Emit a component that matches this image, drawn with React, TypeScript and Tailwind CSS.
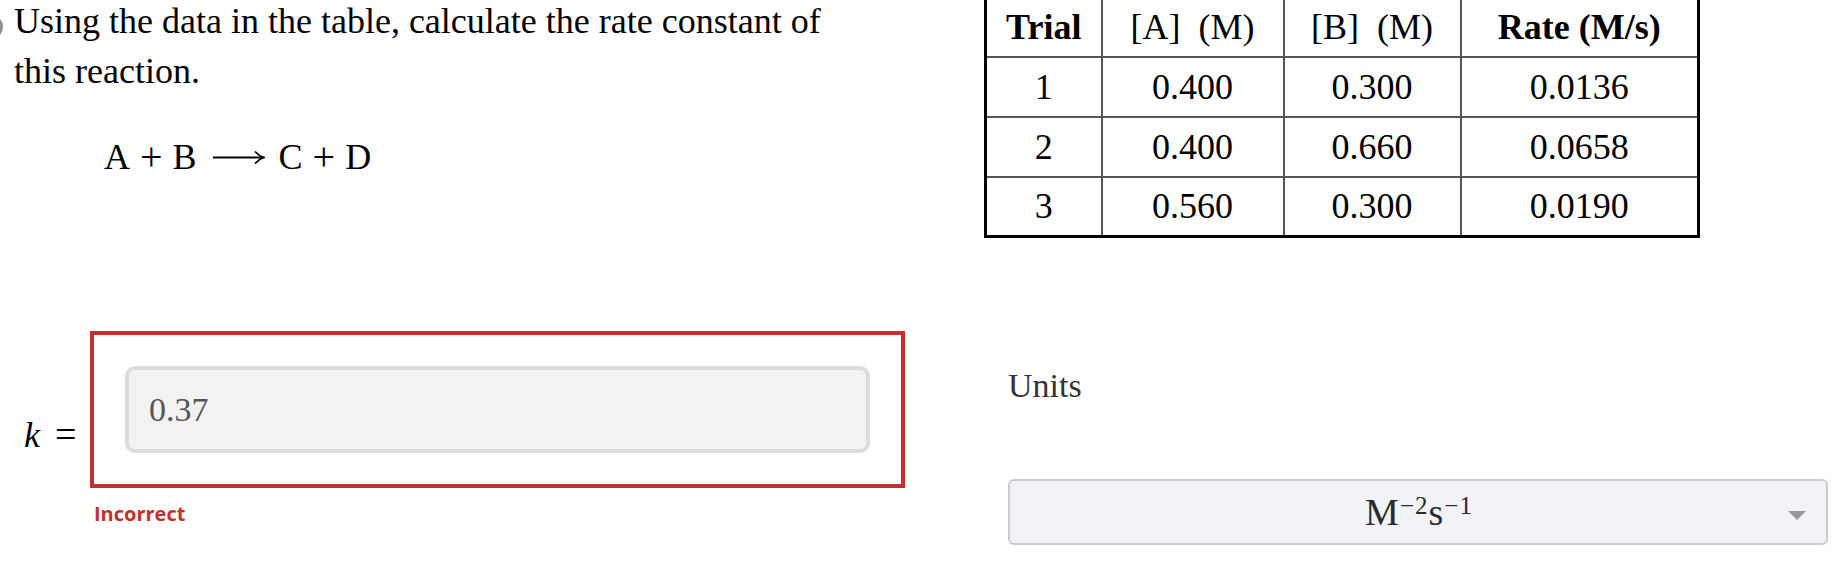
export default function App() {
  const serif = "font-['Liberation_Serif','Times_New_Roman',serif]";
  return (
    <div className={`w-[1848px] h-[576px] overflow-hidden bg-white text-black ${serif}`}>
      {/* question + data table */}
      <div className="flex">
        <div className="w-[984px] shrink-0">
          <div className="flex -mt-[4px]">
            <span className="-ml-[23px] mt-[18px] mr-[11px] w-[26px] h-[26px] rounded-full bg-[#8e8e8e] shrink-0" />
            <p className="w-[820px] text-[36px] leading-[50px]">
              Using the data in the table, calculate the rate constant of this reaction.
            </p>
          </div>
          <div className="mt-[36px] ml-[104px] flex items-center text-[36px] leading-[50px] whitespace-nowrap">
            <span>A</span>
            <span className="mx-[10px] text-[40px]">+</span>
            <span>B</span>
            <svg className="ml-[16px] mr-[14px]" width="52" height="20" viewBox="0 0 52 20" fill="none">
              <path d="M0 10.5H50" stroke="black" strokeWidth="2" />
              <path d="M42 4.5Q46 9 51 10.5Q46 12 42 16.5" stroke="black" strokeWidth="1.8" />
            </svg>
            <span>C</span>
            <span className="mx-[10px] text-[40px]">+</span>
            <span>D</span>
          </div>
        </div>
        <table className="-mt-[4px] h-fit border-collapse border-[3px] border-black text-[36px] leading-[40px] text-center">
          <thead>
            <tr className="h-[59px]">
              <th className="w-[116px] border-2 border-[#555] font-bold">Trial</th>
              <th className="w-[182px] border-2 border-[#555] font-normal">[A]&nbsp; (M)</th>
              <th className="w-[177px] border-2 border-[#555] font-normal">[B]&nbsp; (M)</th>
              <th className="w-[238px] border-2 border-[#555] font-bold">Rate (M/s)</th>
            </tr>
          </thead>
          <tbody>
            {[
              ["1", "0.400", "0.300", "0.0136"],
              ["2", "0.400", "0.660", "0.0658"],
              ["3", "0.560", "0.300", "0.0190"],
            ].map((row) => (
              <tr key={row[0]} className="h-[60px]">
                {row.map((c, i) => (
                  <td key={i} className="border-2 border-[#555]">
                    {c}
                  </td>
                ))}
              </tr>
            ))}
          </tbody>
        </table>
      </div>

      {/* answer row */}
      <div className="flex mt-[93px]">
        <div className="flex w-[1008px] shrink-0">
          <div className="w-[90px] shrink-0 pl-[24px] pt-[78px] text-[36px] leading-[50px] whitespace-nowrap">
            <i>k</i>
            <span className="ml-[15px] text-[38px]">=</span>
          </div>
          <div>
            <div className="w-[815px] h-[157px] border-[4px] border-[#c5302e] p-[31px]">
              <div className="h-[87px] rounded-[10px] border-[4px] border-[#dddddd] bg-[#f2f2f2] pl-[20px] flex items-center text-[34px] text-[#555]">
                0.37
              </div>
            </div>
            <div className="mt-[12px] ml-[4px] font-['Open_Sans',sans-serif] font-bold text-[20px] leading-[28px] text-[#c5302e]">
              Incorrect
            </div>
          </div>
        </div>
        <div>
          <div className="mt-[30px] text-[34px] leading-[50px] text-[#333]">Units</div>
          <div className="relative mt-[68px] w-[820px] h-[66px] rounded-[6px] border-2 border-[#cccccc] bg-[#f2f3f7] flex items-center justify-center text-[38px] text-[#2a2a2a]">
            <span className="ml-[2px] leading-[50px]">
              M<sup className="ml-[1px] text-[25px] -top-[0.45em] tracking-[1px]">−2</sup>s
              <sup className="ml-[1px] text-[25px] -top-[0.45em] tracking-[1px]">−1</sup>
            </span>
            <span className="absolute right-[20px] top-[30px] w-0 h-0 border-l-[9px] border-r-[9px] border-t-[9px] border-l-transparent border-r-transparent border-t-[#999]" />
          </div>
        </div>
      </div>
    </div>
  );
}
